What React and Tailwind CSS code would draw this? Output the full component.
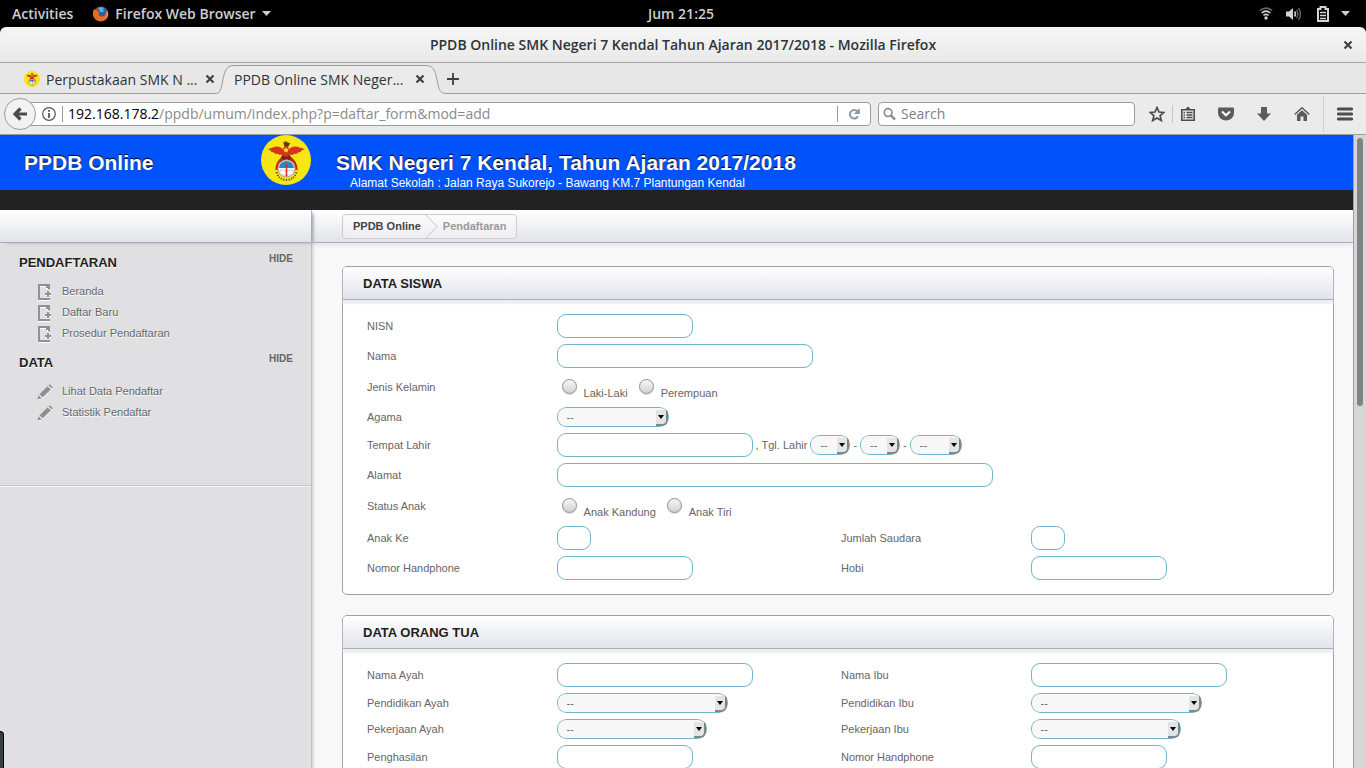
import React, { useState } from 'react';

const PencilIcon = () => (
  <svg width="16" height="16" viewBox="0 0 16 16" className="drop-shadow-[0_1px_0_#fff]">
    <g fill="#909090">
      <path d="M0.5 15.5l1-4.2 3.2 3.2z" />
      <path d="M2.4 10.4L10.6 2.2l3.2 3.2-8.2 8.2z" />
      <path d="M11.5 1.4L12.8 0.2l3 3-1.2 1.3z" />
    </g>
  </svg>
);

const PageAddIcon = () => (
  <svg width="16" height="18" viewBox="0 0 16 18" className="drop-shadow-[0_1px_0_#fff]">
    <path d="M1 1h12v5.500h-2v-1.500h-2v-2h-6v12h5v2h5v0h-12z" fill="#909090" />
    <path d="M8 15h5v2h-5z" fill="#909090" />
    <path d="M10 8h2v2h2v2h-2v2h-2v-2h-2v-2h2z" fill="#909090" />
  </svg>
);

const SchoolLogo = ({ size }) => (
  <svg width={size} height={size} viewBox="0 0 50 50" className="shrink-0">
    <circle cx="25" cy="25" r="25" fill="#f6e614" />
    <path d="M22 18l-4 9h14l-4-9z" fill="#7d2413" />
    <path d="M7 14c4-1 6-2.500 9-2.500 2.500 0 4 1 6 2.500l1.500-3h3l1.500 3c2-1.500 3.500-2.500 6-2.500 3 0 6 1.500 10 2.500l-3.500 1.500-1 1.500-2.500.5-1.500 1.500-2.500-.2-1.500 1.200-3-.5-1.500 2h-4l-1.500-2-3 .5-1.500-1.200-2.500.2-1.500-1.500-2.500-.5-1-1.500z" fill="#d8321c" />
    <path d="M22 6.500l1.500 1 1.500-1.500 1.500 1.500 2.500.5-1.500 3.500h-4z" fill="#6b3418" />
    <path d="M25 12l1 2h2l-1.500 1.500.5 2-2-1-2 1 .5-2-1.500-1.500h2z" fill="#f8e71c" />
    <circle cx="25.500" cy="33.500" r="9" fill="#fff" />
    <path d="M15.500 35c0-6 3-10 6-12M35.500 35c0-6-3-10-6-12" fill="none" stroke="#c22a1a" strokeWidth="2.200" />
    <circle cx="25.500" cy="33.500" r="8.500" fill="none" stroke="#a8402c" strokeWidth="0.600" />
    <path d="M18 33a7.500 7 0 0 1 15 0z" fill="#2389c9" />
    <path d="M19 35l6.500 1 6.500-1v4.500q-6.500 2-13 0z" fill="#fff" stroke="#9a9a9a" strokeWidth="0.500" />
    <path d="M25.500 28l1.800 4h-1v9.500h-1.600v-9.500h-1z" fill="#d8321c" />
    <path d="M15.500 37q2.500 8 10 8t10-8" fill="none" stroke="#5a5528" strokeWidth="2" strokeDasharray="1.200 1.400" />
  </svg>
);

const FirefoxIcon = () => (
  <svg width="16" height="16" viewBox="0 0 16 16">
    <circle cx="8" cy="8" r="7.500" fill="#c9401a" />
    <circle cx="8.500" cy="6.500" r="5.800" fill="#2a5f9e" />
    <path d="M5 2.500c2-2 5-1.500 6 0-1 0-1 2 0 3l-3 1z" fill="#4fb4e0" />
    <path d="M1 3c1 1 2 1 3 1 0 1 1 2 3 2-1 1-2 2-1 3 1 2 4 2 6 0 1-1 1-3 0-5 3 2 4 6 1 9-3 3-8 3-11 0s-2.500-7-1-10z" fill="#ea6a20" />
    <path d="M14 4.500c1.500 3 0.500 6.500-2 8.500 2-3 2-5.500 2-8.500z" fill="#fbc43a" />
  </svg>
);

const CloseIcon = () => (
  <svg width="10" height="10" viewBox="0 0 10 10">
    <path d="M1.500 1.500l7 7M8.500 1.500l-7 7" stroke="#3c4143" strokeWidth="2.200" />
  </svg>
);

const TopBar = () => (
  <header className="flex h-[27px] shrink-0 items-center bg-black pl-3 pr-4 text-[14px] font-semibold text-[#cfcfcf]">
    <div className="flex flex-1 items-center">
      <button type="button">Activities</button>
      <button type="button" className="ml-5 flex items-center gap-1.5">
        <FirefoxIcon />
        Firefox Web Browser
        <svg width="9" height="5" viewBox="0 0 9 5"><path d="M0 0h9l-4.500 5z" fill="#cfcfcf" /></svg>
      </button>
    </div>
    <time>Jum 21:25</time>
    <div className="flex flex-1 items-center justify-end gap-3">
      <svg width="14" height="13" viewBox="0 0 14 13" fill="none" strokeWidth="1.600">
        <path d="M0.800 3.600q6.200-5 12.400 0" stroke="#666" />
        <path d="M2.600 6q4.400-3.600 8.800 0M4.400 8.400q2.600-2 5.200 0" stroke="#d3d3d3" />
        <circle cx="7" cy="11" r="1.700" fill="#d3d3d3" />
      </svg>
      <svg width="16" height="14" viewBox="0 0 16 14" fill="none">
        <path d="M1 4.500h3l4-3.500v12l-4-3.500h-3z" fill="#d3d3d3" />
        <path d="M9.500 4.500q2 2.500 0 5" stroke="#d3d3d3" strokeWidth="1.500" />
        <path d="M11.500 2.800q3 4.200 0 8.400M13.500 1.200q4 5.800 0 11.600" stroke="#6a6a6a" strokeWidth="1.300" />
      </svg>
      <svg width="12" height="16" viewBox="0 0 12 16" className="ml-1">
        <path d="M1 3h2.500v-2h5v2h2.500v12h-10z" fill="none" stroke="#d3d3d3" strokeWidth="2" />
        <path d="M3 6.500h6M3 9.500h6M3 12.500h6" stroke="#d3d3d3" strokeWidth="1.500" />
      </svg>
      <svg width="9" height="5" viewBox="0 0 9 5"><path d="M0 0h9l-4.500 5z" fill="#cfcfcf" /></svg>
    </div>
  </header>
);

const TitleBar = () => (
  <div className="shrink-0 bg-black">
    <div className="flex h-9 items-center rounded-t-md border-b border-[#a1a1a1] bg-gradient-to-b from-[#f6f6f6] to-[#e9e9e9] px-[13px] text-[14px] font-semibold text-[#2e3436]">
      <span className="flex-1" />
      <h1>PPDB Online SMK Negeri 7 Kendal Tahun Ajaran 2017/2018 - Mozilla Firefox</h1>
      <span className="flex flex-1 justify-end">
        <button type="button" aria-label="Close window"><CloseIcon /></button>
      </span>
    </div>
  </div>
);

const TabBar = () => (
  <div className="flex h-[31px] shrink-0 border-b border-[#9b9b9b] bg-[#e7e7e7] text-[14px] text-[#2e3436]">
    <div className="flex w-[215px] items-center pl-6 pt-0.5">
      <SchoolLogo size={16} />
      <span className="ml-1.5 w-[159px]">Perpustakaan SMK N ...</span>
      <button type="button" aria-label="Close tab"><CloseIcon /></button>
    </div>
    <svg width="19" height="29" viewBox="0 0 19 29" className="mt-0.5">
      <path d="M0 28.500c9 0 6-28 18-28h1v28.500h-19z" fill="#ebebeb" />
      <path d="M0 28.500c5 0 6-3 8-14s5-14 11-14" fill="none" stroke="#9b9b9b" />
    </svg>
    <div className="z-10 -mb-px mt-0.5 flex items-center border-t border-[#9b9b9b] bg-[#ebebeb] pb-0.5">
      <span className="w-[181px]">PPDB Online SMK Neger...</span>
      <button type="button" aria-label="Close tab"><CloseIcon /></button>
    </div>
    <svg width="22" height="29" viewBox="0 0 22 29" className="mt-0.5">
      <path d="M22 28.500c-10 0-6-28-20-28h-2v28.500h22z" fill="#ebebeb" />
      <path d="M22 28.500c-7 0-8-3-10-14s-5-14-12-14" fill="none" stroke="#9b9b9b" />
    </svg>
    <button type="button" aria-label="New tab" className="pt-0.5">
      <svg width="12" height="12" viewBox="0 0 12 12"><path d="M6 0v12M0 6h12" stroke="#3c4143" strokeWidth="1.800" /></svg>
    </button>
  </div>
);

const Toolbar = () => (
  <div className="flex h-[41px] shrink-0 items-center border-b border-[#9b9b9b] bg-[#ebebeb] pl-1 pr-[13px] text-[14px]">
    <button type="button" aria-label="Back" className="z-10 -mr-4 flex size-8 items-center justify-center rounded-full border border-[#9b9b9b] bg-[#f2f2f2]">
      <svg width="14" height="14" viewBox="0 0 14 14"><path d="M7.500 1.500L2 7l5.500 5.500M2.500 7h11.500" fill="none" stroke="#4c4c4c" strokeWidth="3.200" /></svg>
    </button>
    <div className="flex h-6 flex-1 items-center rounded-r-sm border border-[#9b9b9b] bg-white pl-[21px] pr-2.5">
      <svg width="14" height="14" viewBox="0 0 14 14">
        <circle cx="7" cy="7" r="6.300" fill="none" stroke="#555" strokeWidth="1.200" />
        <path d="M7 6v5M7 3v1.800" stroke="#555" strokeWidth="1.800" />
      </svg>
      <p className="ml-1.5 flex-1 border-l border-[#9b9b9b] pl-[5px] leading-4 text-[#8a8a8a]">
        <span className="text-black">192.168.178.2</span>/ppdb/umum/index.php?p=daftar_form&amp;mod=add
      </p>
      <button type="button" aria-label="Reload" className="border-l border-[#9b9b9b] pl-2.5">
        <svg width="12" height="16" viewBox="0 0 12 16">
          <path d="M9.500 5.500A4.300 4.300 0 1 0 10 10.300" fill="none" stroke="#8d9aa5" strokeWidth="2" />
          <path d="M11.800 2v6h-6z" fill="#8d9aa5" />
        </svg>
      </button>
    </div>
    <label className="ml-[7px] flex h-6 w-[257px] items-center rounded-sm border border-[#9b9b9b] bg-white pl-1">
      <svg width="14" height="14" viewBox="0 0 14 14" fill="none" stroke="#8c8c8c">
        <circle cx="5.500" cy="5.500" r="4.200" strokeWidth="1.800" />
        <path d="M8.500 8.500l4.500 4.500" strokeWidth="2.600" />
      </svg>
      <input aria-label="Search" placeholder="Search" className="ml-[5px] w-full leading-5 outline-none placeholder:text-[#808080]" />
    </label>
    <div className="ml-3.5 flex items-center">
      <button type="button" aria-label="Bookmark">
        <svg width="16" height="16" viewBox="0 0 16 16"><path d="M8 1.500l2 4.500 4.800.4-3.700 3.200 1.200 4.900L8 11.900l-4.300 2.600 1.200-4.900L1.200 6.400 6 6z" fill="none" stroke="#4c4c4c" strokeWidth="1.700" /></svg>
      </button>
      <span className="ml-[7px] h-[18px] w-px bg-[#c6c6c6]" />
      <button type="button" aria-label="Bookmarks list" className="ml-[7px]">
        <svg width="16" height="16" viewBox="0 0 16 16">
          <path d="M1.800 3.800h12.400v10.400h-12.400z" fill="none" stroke="#4c4c4c" strokeWidth="1.600" />
          <path d="M4.500 4l3.500-3.500 3.500 3.500z" fill="#4c4c4c" />
          <path d="M3.500 6.500h1.500M6.500 6.500h6M3.500 9h1.500M6.500 9h6M3.500 11.500h1.500M6.500 11.500h6" stroke="#4c4c4c" strokeWidth="1.300" />
        </svg>
      </button>
      <button type="button" aria-label="Pocket" className="ml-[22px]">
        <svg width="16" height="16" viewBox="0 0 16 16">
          <path d="M1 1.500h14q1 0 1 1v4.500a8 7.500 0 0 1-16 0v-4.500q0-1 1-1z" fill="#5b5b5b" />
          <path d="M4 5.500l4 3.800 4-3.800" fill="none" stroke="#fff" strokeWidth="2" />
        </svg>
      </button>
      <button type="button" aria-label="Downloads" className="ml-[22px]">
        <svg width="16" height="16" viewBox="0 0 16 16"><path d="M5 1h6v6.500h4l-7 7.500-7-7.500h4z" fill="#5b5b5b" /></svg>
      </button>
      <button type="button" aria-label="Home" className="ml-[22px]">
        <svg width="16" height="16" viewBox="0 0 16 16">
          <path d="M0.700 8.500L8 1.700l7.300 6.800" fill="none" stroke="#5b5b5b" strokeWidth="1.500" />
          <path d="M3 8.700l5-4.500 5 4.500v6.300h-3.500v-4.500h-3v4.500h-3.500z" fill="#5b5b5b" />
        </svg>
      </button>
      <span className="ml-[13px] h-9 w-px bg-[#d0d0d0]" />
      <button type="button" aria-label="Menu" className="ml-[13px]">
        <svg width="16" height="14" viewBox="0 0 16 14"><path d="M1.300 2h13.400M1.300 7h13.400M1.300 12h13.400" stroke="#4c4c4c" strokeWidth="2.800" strokeLinecap="round" /></svg>
      </button>
    </div>
  </div>
);

const SideMenu = ({ title, items, icon }) => {
  const [open, setOpen] = useState(true);

  return (
    <section className="mb-[7px]">
      <div className="flex items-start justify-between pb-1.5">
        <h3 className="text-[13px] font-bold leading-6 text-[#1f1f20]">{title}</h3>
        <button type="button" onClick={() => setOpen(!open)} className="text-[10px] font-bold leading-4 text-[#666]">
          {open ? 'HIDE' : 'SHOW'}
        </button>
      </div>
      {open && (
        <ul>
          {items.map((item) => (
            <li key={item}>
              <a href="#" className="flex h-[21px] items-center gap-[9px] pl-[18px]">
                {icon}
                {item}
              </a>
            </li>
          ))}
        </ul>
      )}
    </section>
  );
};

const Sidebar = () => (
  <aside className="z-10 w-[312px] shrink-0 border-r border-[#bfbfc2] bg-[#e0e0e2] shadow-[1px_3px_3px_#c9c9cc] [text-shadow:0_1px_0_#fff]">
    <div className="h-[33px] border-b border-[#a9adbd] bg-gradient-to-b from-white to-[#e2e3ea] shadow-[4px_2px_3px_-2px_#a5a5aa]" />
    <nav className="h-[243px] border-b border-[#c6c6c9] pl-[19px] pr-[18px] pt-2 shadow-[0_1px_0_#f4f4f5]">
      <SideMenu title="PENDAFTARAN" icon={<PageAddIcon />} items={['Beranda', 'Daftar Baru', 'Prosedur Pendaftaran']} />
      <SideMenu title="DATA" icon={<PencilIcon />} items={['Lihat Data Pendaftar', 'Statistik Pendaftar']} />
    </nav>
  </aside>
);

const Field = ({ id, label, wide, children }) => (
  <>
    <label htmlFor={id} className="flex items-center">{label}</label>
    <div className={`flex items-center py-[3px] ${wide ? 'col-span-3' : ''}`}>{children}</div>
  </>
);

const TextInput = ({ id, width }) => (
  <input id={id} type="text" className={`h-6 rounded-[9px] border border-[#6fb6ca] bg-white px-2 outline-none ${width}`} />
);

const SelectBox = ({ id, width, label }) => (
  <span className={`relative flex h-5 overflow-hidden rounded-[9px] ${width}`}>
    <select id={id} aria-label={label} className="w-full appearance-none rounded-[9px] border border-[#6fb6ca] bg-[#f7f7f7] pl-[9px] outline-none">
      <option>--</option>
    </select>
    <span className="pointer-events-none absolute bottom-px right-px top-[3px] flex w-3 items-center justify-center rounded-br-md border-b-2 border-r-2 border-[#858585] bg-[#e4e4e4]">
      <svg width="6" height="4" viewBox="0 0 6 4"><path d="M0 0h6l-3 4z" fill="#000" /></svg>
    </span>
  </span>
);

const RadioGroup = ({ name, options }) => (
  <div className="flex h-[27px] gap-[11px] pl-[5px] pt-[5px]">
    {options.map((option) => (
      <label key={option} className="flex items-start gap-[7px]">
        <input type="radio" name={name} className="size-[15px] appearance-none rounded-full border border-[#8f8f8f] bg-gradient-to-b from-[#f6f6f6] to-[#d2d2d2] shadow-[0_1px_1px_#ddd] checked:bg-[#6fb6ca]" />
        <span className="mt-1.5 leading-4">{option}</span>
      </label>
    ))}
  </div>
);

const Panel = ({ title, children }) => (
  <fieldset className="mb-5 rounded-[5px] border border-[#9a9fb2] bg-white">
    <h2 className="rounded-t-[4px] border-b border-[#a9adbd] bg-gradient-to-b from-white to-[#e2e3ea] pl-5 pt-0.5 text-[13px] font-bold leading-[30px] text-[#1f1f20] shadow-[0_4px_2px_#eeeef1]">
      {title}
    </h2>
    <div className="grid grid-cols-[2fr_3fr_2fr_3fr] pb-[11px] pl-6 pr-[18px] pt-[11px]">{children}</div>
  </fieldset>
);

const RegistrationForm = () => (
  <form className="pl-[30px] pr-[19px] pt-[23px]">
    <Panel title="DATA SISWA">
      <Field id="nisn" label="NISN" wide><TextInput id="nisn" width="w-[136px]" /></Field>
      <Field id="nama" label="Nama" wide><TextInput id="nama" width="w-[256px]" /></Field>
      <Field label="Jenis Kelamin" wide><RadioGroup name="kelamin" options={['Laki-Laki', 'Perempuan']} /></Field>
      <Field id="agama" label="Agama" wide><SelectBox id="agama" width="w-28" /></Field>
      <Field id="tempat" label="Tempat Lahir" wide>
        <TextInput id="tempat" width="w-[196px]" />
        <label htmlFor="tgl" className="mx-[3px]">, Tgl. Lahir</label>
        <SelectBox id="tgl" width="w-10" />
        <span className="mx-[3px]">-</span>
        <SelectBox label="Bulan" width="w-10" />
        <span className="mx-[3px]">-</span>
        <SelectBox label="Tahun" width="w-[52px]" />
      </Field>
      <Field id="alamat" label="Alamat" wide><TextInput id="alamat" width="w-[436px]" /></Field>
      <Field label="Status Anak" wide><RadioGroup name="status" options={['Anak Kandung', 'Anak Tiri']} /></Field>
      <Field id="anakke" label="Anak Ke"><TextInput id="anakke" width="w-[34px]" /></Field>
      <Field id="saudara" label="Jumlah Saudara"><TextInput id="saudara" width="w-[34px]" /></Field>
      <Field id="hp" label="Nomor Handphone"><TextInput id="hp" width="w-[136px]" /></Field>
      <Field id="hobi" label="Hobi"><TextInput id="hobi" width="w-[136px]" /></Field>
    </Panel>
    <Panel title="DATA ORANG TUA">
      <Field id="ayah" label="Nama Ayah"><TextInput id="ayah" width="w-[196px]" /></Field>
      <Field id="ibu" label="Nama Ibu"><TextInput id="ibu" width="w-[196px]" /></Field>
      <Field id="pendayah" label="Pendidikan Ayah"><SelectBox id="pendayah" width="w-[171px]" /></Field>
      <Field id="pendibu" label="Pendidikan Ibu"><SelectBox id="pendibu" width="w-[171px]" /></Field>
      <Field id="kerjaayah" label="Pekerjaan Ayah"><SelectBox id="kerjaayah" width="w-[150px]" /></Field>
      <Field id="kerjaibu" label="Pekerjaan Ibu"><SelectBox id="kerjaibu" width="w-[150px]" /></Field>
      <Field id="hasil" label="Penghasilan"><TextInput id="hasil" width="w-[136px]" /></Field>
      <Field id="hportu" label="Nomor Handphone"><TextInput id="hportu" width="w-[136px]" /></Field>
    </Panel>
  </form>
);

const Page = () => (
  <div className="flex min-h-0 flex-1 flex-col overflow-y-auto bg-[#f8f8f8] font-['Liberation_Sans',sans-serif] text-[11px] text-[#666] [scrollbar-width:none]">
    <header className="flex h-[55px] shrink-0 bg-[#0052fa] text-white">
      <h2 className="w-[261px] pl-6 pt-3 text-[21px] font-bold leading-[31px] [text-shadow:0_-1px_1px_#000]">PPDB Online</h2>
      <SchoolLogo size={50} />
      <div className="ml-[25px] pt-3">
        <h2 className="text-[21px] font-bold leading-[31px] [text-shadow:0_-1px_1px_#000]">SMK Negeri 7 Kendal, Tahun Ajaran 2017/2018</h2>
        <p className="pl-3.5 text-[12px] leading-[10px]">Alamat Sekolah : Jalan Raya Sukorejo - Bawang KM.7 Plantungan Kendal</p>
      </div>
    </header>
    <div className="h-5 shrink-0 bg-[#222]" />
    <div className="flex flex-1">
      <Sidebar />
      <main className="min-w-0 flex-1">
        <div className="flex h-[33px] border-b border-[#a9adbd] bg-gradient-to-b from-white to-[#e2e3ea] pl-[30px] pt-1 shadow-[0_3px_3px_#e9e9ee]">
          <nav className="flex h-[25px] items-center rounded-[4px] border border-[#ccc] bg-gradient-to-b from-[#fbfbfb] to-[#eeeef1] pl-2.5 pr-2.5 font-bold">
            <a href="#" className="text-[#444]">PPDB Online</a>
            <svg width="13" height="23" viewBox="0 0 13 23" className="ml-1 mr-[5px]"><path d="M1 0l11 11.500L1 23" fill="none" stroke="#c4c4c4" /></svg>
            <span className="text-[#9a9a9a]">Pendaftaran</span>
          </nav>
        </div>
        <RegistrationForm />
      </main>
    </div>
  </div>
);

export default function App() {
  return (
    <div className="relative flex h-screen flex-col overflow-hidden font-['Open_Sans',sans-serif]">
      <TopBar />
      <TitleBar />
      <TabBar />
      <Toolbar />
      <div className="flex min-h-0 flex-1">
        <Page />
        <div className="w-[13px] shrink-0 border-l border-[#a0a0a0] bg-[#d6d6d6] px-[3px] pt-[3px]">
          <div className="h-[268px] rounded-full bg-[#7f8383]" />
        </div>
      </div>
      <div className="absolute bottom-0 left-0 z-20 h-[37px] w-1 rounded-tr-sm border-r border-t border-black bg-[#393f3f]" />
    </div>
  );
}
